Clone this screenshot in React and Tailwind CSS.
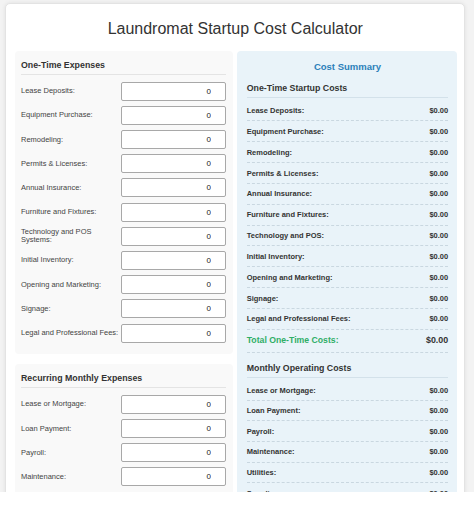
import React from "react";

const oneTime = [
  "Lease Deposits:",
  "Equipment Purchase:",
  "Remodeling:",
  "Permits & Licenses:",
  "Annual Insurance:",
  "Furniture and Fixtures:",
  "Technology and POS Systems:",
  "Initial Inventory:",
  "Opening and Marketing:",
  "Signage:",
  "Legal and Professional Fees:",
];

const oneTimeSummary = [
  "Lease Deposits:",
  "Equipment Purchase:",
  "Remodeling:",
  "Permits & Licenses:",
  "Annual Insurance:",
  "Furniture and Fixtures:",
  "Technology and POS:",
  "Initial Inventory:",
  "Opening and Marketing:",
  "Signage:",
  "Legal and Professional Fees:",
];

const monthlyInputs = [
  "Lease or Mortgage:",
  "Loan Payment:",
  "Payroll:",
  "Maintenance:",
  "Utilities:",
];

const monthlySummary = [
  "Lease or Mortgage:",
  "Loan Payment:",
  "Payroll:",
  "Maintenance:",
  "Utilities:",
  "Supplies:",
];

function InputRow({ label }) {
  return (
    <div className="flex items-center justify-between">
      <label className="w-[100px] text-[7.5px] leading-[8px] text-[#444]">{label}</label>
      <input
        type="text"
        defaultValue="0"
        className="w-[105px] h-[19px] border border-[#a8a8a8] rounded-[2px] bg-white text-right pr-[14px] text-[8px] text-[#222] outline-none"
      />
    </div>
  );
}

function Panel({ title, items }) {
  return (
    <div className="bg-[#f9f9f9] rounded-[4px] pt-[8.9px] pl-[6px] pr-[7px] pb-[11px]">
      <h3 className="text-[8.8px] leading-[11px] font-bold text-[#333] pb-[3.4px] border-b border-[#e4e4e4] mb-[6.4px]">
        {title}
      </h3>
      <div className="flex flex-col gap-[5.2px]">
        {items.map((l) => (
          <InputRow key={l} label={l} />
        ))}
      </div>
    </div>
  );
}

function SumRow({ label, tight }) {
  return (
    <div
      className={`flex justify-between items-center pt-[5.55px] ${
        tight ? "pb-[5.05px]" : "pb-[5.28px]"
      } border-b border-dashed border-[#c9d7e0] text-[7.5px] leading-[9px] font-bold text-[#333]`}
    >
      <span>{label}</span>
      <span>$0.00</span>
    </div>
  );
}

function SumHeading({ children, className = "" }) {
  return (
    <h4
      className={`text-[8.8px] leading-[11px] font-bold text-[#333] pb-[3.2px] border-b border-[#d3e1ea] mb-[2.2px] ${className}`}
    >
      {children}
    </h4>
  );
}

export default function App() {
  return (
    <div
      className="w-[474px] h-[505px] bg-white"
      style={{ fontFamily: '"Liberation Sans", Arial, sans-serif' }}
    >
      <div className="h-[492px] overflow-hidden bg-[#f3f3f3] pt-[3px] pl-[4.5px]">
        <div className="w-[460px] bg-white border border-[#e3e3e3] rounded-[5px] shadow-[0_0_4px_rgba(0,0,0,0.08)] pt-[15px] pl-[9.5px] pb-[20px]">
          <h1 className="text-[16px] leading-[19px] text-center text-[#333] mb-[13px] pr-[8px]">
            Laundromat Startup Cost Calculator
          </h1>
          <div className="grid grid-cols-[218px_219.5px] gap-[4.3px] items-start">
            <div className="flex flex-col gap-[10.6px]">
              <Panel title="One-Time Expenses" items={oneTime} />
              <Panel title="Recurring Monthly Expenses" items={monthlyInputs} />
            </div>
            <div className="bg-[#e9f3f9] rounded-[4px] pt-[10.15px] pl-[9.4px] pr-[8.6px] pb-[12px]">
              <h2 className="text-[9.5px] leading-[12px] font-bold text-center text-[#2b80b9] mb-[10.15px]">
                Cost Summary
              </h2>
              <SumHeading>One-Time Startup Costs</SumHeading>
              {oneTimeSummary.map((l) => (
                <SumRow key={l} label={l} />
              ))}
              <div className="flex justify-between items-center pt-[5.6px] pb-[5.8px] border-b border-dashed border-[#c9d7e0] leading-[11px] font-bold">
                <span className="text-[8.7px] text-[#2fae66]">Total One-Time Costs:</span>
                <span className="text-[8.9px] text-[#333]">$0.00</span>
              </div>
              <SumHeading className="mt-[9.8px]">Monthly Operating Costs</SumHeading>
              {monthlySummary.map((l) => (
                <SumRow key={l} label={l} tight />
              ))}
            </div>
          </div>
        </div>
      </div>
    </div>
  );
}
